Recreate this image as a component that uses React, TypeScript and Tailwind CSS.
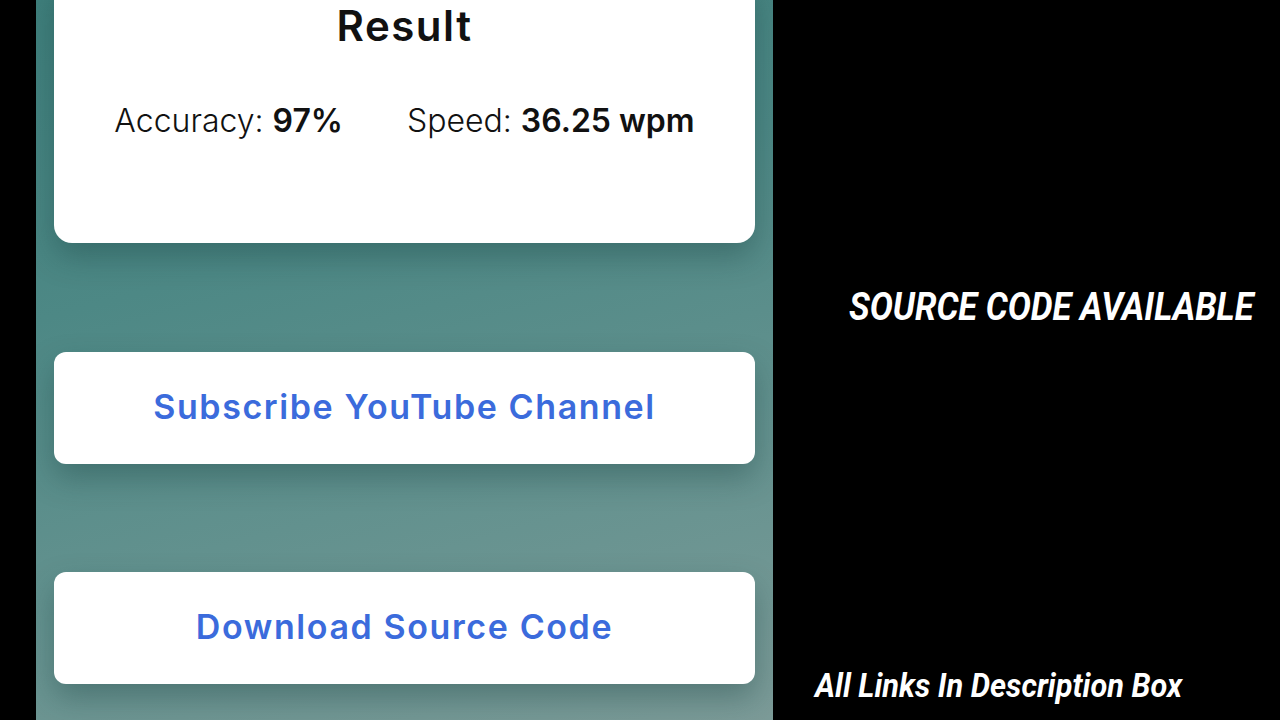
import { FC } from 'react';

const poppins = { fontFamily: 'Inter, "Open Sans", sans-serif' };

const LinkButton: FC<{ label: string }> = ({ label }) => (
  <button className="w-full h-[112px] bg-white rounded-[12px] shadow-[0_14px_30px_rgba(20,60,60,0.35)] flex items-center justify-center pb-[3px]">
    <span className="text-[34px] font-semibold text-[#3b6bdc] tracking-[1.6px]">{label}</span>
  </button>
);

const App: FC = () => {
  return (
    <div className="w-[1280px] h-[720px] bg-black flex overflow-hidden">
      {/* Left black strip */}
      <div className="w-[36px] shrink-0" />

      {/* Phone screen */}
      <div
        className="w-[737px] shrink-0 h-full px-[18px] flex flex-col bg-[linear-gradient(165deg,#3f7f7c_0%,#4d8885_35%,#62918e_65%,#7c9b98_100%)] overflow-hidden"
        style={poppins}
      >
        {/* Result card */}
        <div className="-mt-[24px] h-[267px] shrink-0 bg-white rounded-[18px] shadow-[0_14px_30px_rgba(20,60,60,0.35)] flex flex-col items-center pt-[25px]">
          <h2 className="text-[42px] leading-[50px] font-semibold text-[#111] tracking-[1.5px]">Result</h2>
          <div className="mt-[50px] flex items-center gap-[64px] text-[32px] leading-[40px] text-[#111]">
            <p>
              <span className="font-light">Accuracy:</span> <span className="font-semibold">97%</span>
            </p>
            <p>
              <span className="font-light">Speed:</span> <span className="font-semibold">36.25 wpm</span>
            </p>
          </div>
        </div>

        <div className="mt-[109px]">
          <LinkButton label="Subscribe YouTube Channel" />
        </div>
        <div className="mt-[108px]">
          <LinkButton label="Download Source Code" />
        </div>
      </div>

      {/* Right side captions */}
      <div
        className="flex-1 flex flex-col text-white italic font-bold"
        style={{ fontFamily: 'Roboto, "Liberation Sans", sans-serif' }}
      >
        <div className="mt-[284px] pl-[76px] w-full">
          <p className="text-[38px] leading-[46px] origin-left scale-x-[0.91] whitespace-nowrap">SOURCE CODE AVAILABLE</p>
        </div>
        <div className="mt-[336px] pl-[42px] w-full">
          <p className="text-[33px] leading-[40px] origin-left scale-x-[0.93] whitespace-nowrap">All Links In Description Box</p>
        </div>
      </div>
    </div>
  );
};

export default App;
